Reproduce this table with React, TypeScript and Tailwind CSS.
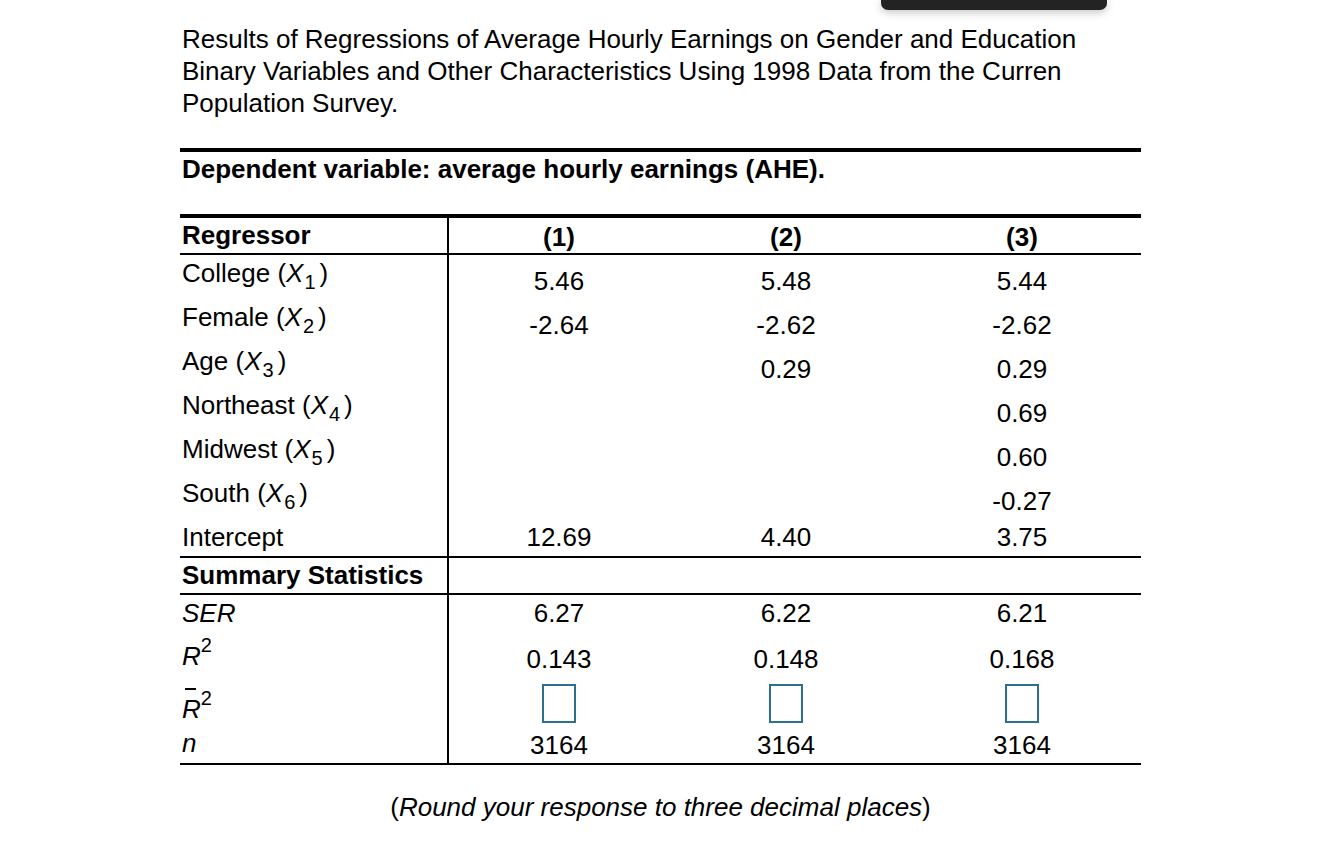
import React from "react";

type Row = {
  label: React.ReactNode;
  vals: React.ReactNode[];
  h: string;
  lp: string;
  vp: string;
};

const Reg = ({ name, n }: { name: string; n: number }) => (
  <>
    {name} (<i>X</i>
    <sub className="relative top-[7px] pl-[1px] pr-[4px] text-[20px] leading-none">{n}</sub>)
  </>
);

const Sq = () => <sup className="relative -top-[13px] text-[20px] leading-none">2</sup>;

const AnswerBox = () => (
  <input
    type="text"
    aria-label="answer"
    className="mx-auto mt-[4px] block h-[39px] w-[34px] border-2 border-[#2f6f8e] bg-white outline-none"
  />
);

const RBar = () => (
  <span className="relative inline-block italic">
    <span className="absolute left-[3px] top-[-6px] h-[2px] w-[11px] bg-black" />
    R
  </span>
);

const upper: Row[] = [
  { label: <Reg name="College" n={1} />, vals: ["5.46", "5.48", "5.44"], h: "h-[44px]", lp: "pt-[3px]", vp: "pt-[11px]" },
  { label: <Reg name="Female" n={2} />, vals: ["-2.64", "-2.62", "-2.62"], h: "h-[44px]", lp: "pt-[3px]", vp: "pt-[11px]" },
  { label: <Reg name="Age" n={3} />, vals: ["", "0.29", "0.29"], h: "h-[44px]", lp: "pt-[3px]", vp: "pt-[11px]" },
  { label: <Reg name="Northeast" n={4} />, vals: ["", "", "0.69"], h: "h-[44px]", lp: "pt-[3px]", vp: "pt-[11px]" },
  { label: <Reg name="Midwest" n={5} />, vals: ["", "", "0.60"], h: "h-[44px]", lp: "pt-[3px]", vp: "pt-[11px]" },
  { label: <Reg name="South" n={6} />, vals: ["", "", "-0.27"], h: "h-[44px]", lp: "pt-[3px]", vp: "pt-[11px]" },
  { label: "Intercept", vals: ["12.69", "4.40", "3.75"], h: "h-[37px]", lp: "pt-[3px]", vp: "pt-[3px]" },
];

const stats: Row[] = [
  { label: <i>SER</i>, vals: ["6.27", "6.22", "6.21"], h: "h-[41px]", lp: "pt-[3px]", vp: "pt-[3px]" },
  {
    label: (
      <>
        <i>R</i>
        <Sq />
      </>
    ),
    vals: ["0.143", "0.148", "0.168"],
    h: "h-[44px]",
    lp: "pt-[5px]",
    vp: "pt-[8px]",
  },
  {
    label: (
      <>
        <RBar />
        <Sq />
      </>
    ),
    vals: [<AnswerBox key="a" />, <AnswerBox key="b" />, <AnswerBox key="c" />],
    h: "h-[46px]",
    lp: "pt-[14px]",
    vp: "pt-0",
  },
  { label: <i>n</i>, vals: ["3164", "3164", "3164"], h: "h-[37px]", lp: "pt-[2px]", vp: "pt-[4px]" },
];

const colW = ["w-[220px]", "w-[234px]", "w-[238px]"];

const TableRow = ({ row, bold }: { row: Row; bold?: boolean }) => (
  <div className={`flex ${row.h}`}>
    <div className={`w-[269px] shrink-0 border-r-2 border-black pl-[2px] ${row.lp} ${bold ? "font-bold" : ""}`}>
      {row.label}
    </div>
    {row.vals.map((v, i) => (
      <div key={i} className={`${colW[i]} shrink-0 text-center ${row.vp} ${bold ? "font-bold" : ""}`}>
        {v}
      </div>
    ))}
  </div>
);

const Line = ({ h }: { h: string }) => <div className={`${h} w-full bg-black`} />;

export default function App() {
  return (
    <div className="relative min-h-[858px] w-[1334px] bg-white font-['Liberation_Sans',Arial,sans-serif] text-[26px] leading-[30px] text-black">
      {/* floating toolbar peeking from the top */}
      <div className="absolute left-[881px] top-0 h-[10px] w-[226px] rounded-b-[7px] bg-[#232323] shadow-[0_2px_8px_rgba(0,0,0,0.25)]" />

      <div className="ml-[180px] w-[961px] pt-[23px]">
        <p className="pl-[2px] leading-[32px]">
          Results of Regressions of Average Hourly Earnings on Gender and Education
          <br />
          Binary Variables and Other Characteristics Using 1998 Data from the Curren
          <br />
          Population Survey.
        </p>

        <div className="mt-[29px]">
          <Line h="h-[4px]" />
          <div className="h-[62px] pl-[2px] pt-[2px] font-bold">Dependent variable: average hourly earnings (AHE).</div>
          <Line h="h-[4px]" />

          <TableRow bold row={{ label: "Regressor", vals: ["(1)", "(2)", "(3)"], h: "h-[35px]", lp: "pt-[2px]", vp: "pt-[4px]" }} />
          <Line h="h-[2px]" />
          {upper.map((r, i) => (
            <TableRow key={i} row={r} />
          ))}
          <Line h="h-[2px]" />
          <TableRow bold row={{ label: "Summary Statistics", vals: ["", "", ""], h: "h-[35px]", lp: "pt-[2px]", vp: "pt-[3px]" }} />
          <Line h="h-[2px]" />
          {stats.map((r, i) => (
            <TableRow key={i} row={r} />
          ))}
          <Line h="h-[2px]" />
        </div>

        <p className="mt-[27px] text-center">
          (<i>Round your response to three decimal places</i>)
        </p>
      </div>
    </div>
  );
}
